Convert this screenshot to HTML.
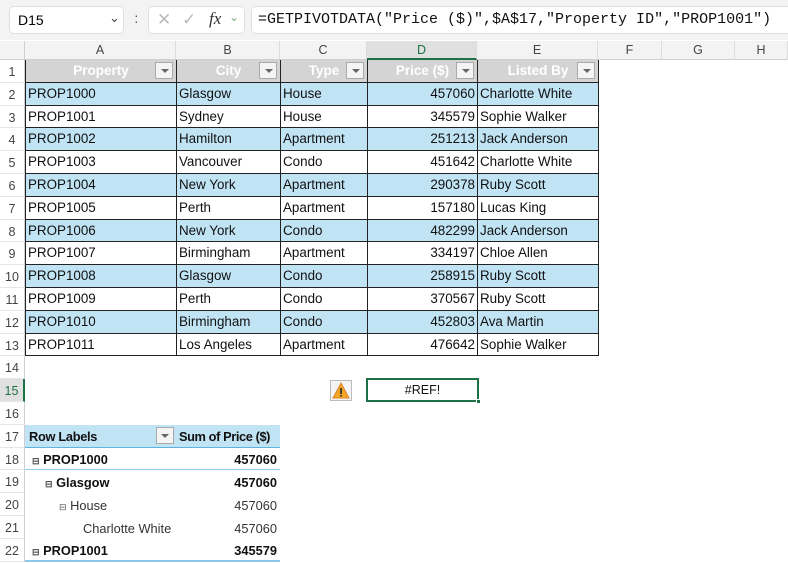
<!DOCTYPE html>
<html><head><meta charset="utf-8"><style>
*{margin:0;padding:0;box-sizing:border-box}
body{width:788px;height:562px;overflow:hidden;background:#fff;font-family:"Liberation Sans",sans-serif;position:relative}
.a{position:absolute}
.tb{left:0;top:0;width:788px;height:40px;background:#f3f3f3}
.box{background:#fff;border:1px solid #e0e0e0;border-radius:5px;height:28px;top:6px}
.colh{top:41px;height:19px;background:#f3f3f3;border-right:1px solid #dcdcdc;border-bottom:1px solid #cfcfcf;font-size:12.5px;color:#444;text-align:center;line-height:19px}
.rowh{left:0;width:25px;height:22.8px;background:#fff;border-bottom:1px solid #e6e6e6;border-right:1px solid #cfcfcf;font-size:12.5px;color:#444;text-align:center;line-height:24px}
.grid{left:25px;top:60px;display:grid;grid-template-columns:151px 104px 87px 110px 121px;grid-auto-rows:22.8px;border-left:1px solid #222}
.grid div{border-right:1px solid #222;border-bottom:1px solid #222;font-size:13.4px;line-height:22px;padding:0 2px;white-space:nowrap;color:#111}
.grid .h{background:#d4d4d4;color:#fff;font-weight:bold;text-align:center;position:relative;font-size:13.5px}
.grid .h span{position:absolute;right:3px;top:2px;width:18px;height:17px;background:#f4f4f4;border:1px solid #aaa}
.grid .h span:after{content:"";position:absolute;left:5px;top:6px;border-left:4px solid transparent;border-right:4px solid transparent;border-top:4px solid #666}
.b{background:#c1e4f5}
.r{text-align:right}
.pv{font-size:12.8px;color:#111;line-height:22px;height:22.8px;white-space:nowrap}
.pr{right:511px;text-align:right}
</style></head><body>
<div class="a tb"></div>
<div class="a box" style="left:9px;width:115px"><span class="a" style="left:8px;top:5px;font-size:14px">D15</span><span class="a" style="left:99px;top:3px;font-size:13px;color:#444">&#8964;</span></div>
<div class="a" style="left:134px;top:12px;width:3px;height:16px;font-size:14px;color:#555;line-height:6px">·<br>·</div>
<div class="a box" style="left:148px;width:97px"><span class="a" style="left:8px;top:3px;font-size:17px;color:#bbb">✕</span><span class="a" style="left:33px;top:3px;font-size:17px;color:#bbb">✓</span><span class="a" style="left:60px;top:2px;font-family:'Liberation Serif',serif;font-style:italic;font-size:17px;color:#333">fx</span><span class="a" style="left:80px;top:3px;font-size:12px;color:#8a8">&#8964;</span></div>
<div class="a box" style="left:251px;width:545px"><span class="a" style="left:6px;top:4px;font-family:'Liberation Mono',monospace;font-size:15px;color:#111;white-space:nowrap">=GETPIVOTDATA("Price ($)",$A$17,"Property ID","PROP1001")</span></div>
<div class="a" style="left:0;top:41px;width:25px;height:19px;background:#f3f3f3;border-right:1px solid #cfcfcf;border-bottom:1px solid #cfcfcf"></div>
<div class="a colh" style="left:25px;width:151px">A</div>
<div class="a colh" style="left:176px;width:104px">B</div>
<div class="a colh" style="left:280px;width:87px">C</div>
<div class="a colh" style="left:367px;width:110px;background:#e0e0e0;border-bottom:2px solid #1e7145;color:#1e7145">D</div>
<div class="a colh" style="left:477px;width:121px">E</div>
<div class="a colh" style="left:598px;width:64px">F</div>
<div class="a colh" style="left:662px;width:73px">G</div>
<div class="a colh" style="left:735px;width:53px">H</div>
<div class="a rowh" style="top:60px">1</div><div class="a rowh" style="top:82.8px">2</div><div class="a rowh" style="top:105.6px">3</div><div class="a rowh" style="top:128.4px">4</div><div class="a rowh" style="top:151.2px">5</div><div class="a rowh" style="top:174px">6</div><div class="a rowh" style="top:196.8px">7</div><div class="a rowh" style="top:219.6px">8</div><div class="a rowh" style="top:242.4px">9</div><div class="a rowh" style="top:265.2px">10</div><div class="a rowh" style="top:288px">11</div><div class="a rowh" style="top:310.8px">12</div><div class="a rowh" style="top:333.6px">13</div><div class="a rowh" style="top:356.4px">14</div><div class="a rowh" style="top:379.2px;background:#e0e0e0;color:#1e7145;border-right:2px solid #1e7145">15</div><div class="a rowh" style="top:402px">16</div><div class="a rowh" style="top:424.8px">17</div><div class="a rowh" style="top:447.6px">18</div><div class="a rowh" style="top:470.4px">19</div><div class="a rowh" style="top:493.2px">20</div><div class="a rowh" style="top:516px">21</div><div class="a rowh" style="top:538.8px">22</div>
<div class="a grid">
<div class="h">Property<span></span></div><div class="h">City<span></span></div><div class="h">Type<span></span></div><div class="h">Price ($)<span></span></div><div class="h">Listed By<span></span></div>
<div class="b">PROP1000</div><div class="b">Glasgow</div><div class="b">House</div><div class="b r">457060</div><div class="b">Charlotte White</div>
<div>PROP1001</div><div>Sydney</div><div>House</div><div class="r">345579</div><div>Sophie Walker</div>
<div class="b">PROP1002</div><div class="b">Hamilton</div><div class="b">Apartment</div><div class="b r">251213</div><div class="b">Jack Anderson</div>
<div>PROP1003</div><div>Vancouver</div><div>Condo</div><div class="r">451642</div><div>Charlotte White</div>
<div class="b">PROP1004</div><div class="b">New York</div><div class="b">Apartment</div><div class="b r">290378</div><div class="b">Ruby Scott</div>
<div>PROP1005</div><div>Perth</div><div>Apartment</div><div class="r">157180</div><div>Lucas King</div>
<div class="b">PROP1006</div><div class="b">New York</div><div class="b">Condo</div><div class="b r">482299</div><div class="b">Jack Anderson</div>
<div>PROP1007</div><div>Birmingham</div><div>Apartment</div><div class="r">334197</div><div>Chloe Allen</div>
<div class="b">PROP1008</div><div class="b">Glasgow</div><div class="b">Condo</div><div class="b r">258915</div><div class="b">Ruby Scott</div>
<div>PROP1009</div><div>Perth</div><div>Condo</div><div class="r">370567</div><div>Ruby Scott</div>
<div class="b">PROP1010</div><div class="b">Birmingham</div><div class="b">Condo</div><div class="b r">452803</div><div class="b">Ava Martin</div>
<div>PROP1011</div><div>Los Angeles</div><div>Apartment</div><div class="r">476642</div><div>Sophie Walker</div>
</div>
<div class="a" style="left:330px;top:380px;width:22px;height:21px;border:1px solid #bbb;background:#f4f4f4"><svg width="20" height="19" viewBox="0 0 20 19"><path d="M10 2 L18 17 H2 Z" fill="#f5a623" stroke="#d9822b"/><rect x="9.2" y="7" width="1.6" height="6" fill="#222"/><rect x="9.2" y="14" width="1.6" height="1.6" fill="#222"/></svg></div>
<div class="a" style="left:366px;top:378px;width:113px;height:24px;border:2px solid #1e7145;font-size:12.5px;text-align:center;line-height:20px;color:#111">#REF!</div>
<div class="a" style="left:476px;top:399px;width:5px;height:5px;background:#1e7145;border:1px solid #fff"></div>
<div class="a" style="left:25px;top:424.8px;width:255px;height:22.8px;background:#c1e4f5;border-bottom:1px solid #5fb3e0"></div>
<div class="a pv" style="left:29px;top:426px;font-weight:bold;letter-spacing:-.3px">Row Labels</div>
<div class="a" style="left:156px;top:427px;width:18px;height:17px;background:#f4f4f4;border:1px solid #aaa"><div class="a" style="left:4px;top:6px;border-left:4px solid transparent;border-right:4px solid transparent;border-top:4px solid #666"></div></div>
<div class="a pv" style="left:179px;top:426px;font-weight:bold;letter-spacing:-.4px">Sum of Price ($)</div>
<div class="a" style="left:25px;top:469px;width:255px;height:1px;background:#8cc8ea"></div>
<div class="a" style="left:25px;top:560px;width:255px;height:2px;background:#8cc8ea"></div>
<div class="a pv" style="left:32px;top:449px;font-weight:bold"><span style="font-size:9px;color:#555">⊟</span> PROP1000</div>
<div class="a pv pr" style="top:449px;font-weight:bold">457060</div>
<div class="a pv" style="left:45px;top:472px;font-weight:bold"><span style="font-size:9px;color:#555">⊟</span> Glasgow</div>
<div class="a pv pr" style="top:472px;font-weight:bold">457060</div>
<div class="a pv" style="left:59px;top:495px;color:#333"><span style="font-size:9px;color:#555">⊟</span> House</div>
<div class="a pv pr" style="top:495px;color:#333">457060</div>
<div class="a pv" style="left:83px;top:518px;color:#333">Charlotte White</div>
<div class="a pv pr" style="top:518px;color:#333">457060</div>
<div class="a pv" style="left:32px;top:540px;font-weight:bold"><span style="font-size:9px;color:#555">⊟</span> PROP1001</div>
<div class="a pv pr" style="top:540px;font-weight:bold">345579</div>
</body></html>
